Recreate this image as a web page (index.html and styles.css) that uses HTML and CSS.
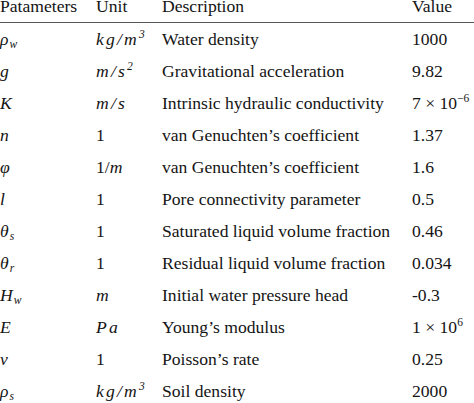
FILE: index.html
```html
<!DOCTYPE html>
<html>
<head>
<meta charset="utf-8">
<link rel="stylesheet" href="styles.css">
</head>
<body>
<div class="table">
  <div class="row head">
    <div class="c1">Patameters</div>
    <div class="c2">Unit</div>
    <div class="c3">Description</div>
    <div class="c4">Value</div>
  </div>
  <div class="row">
    <div class="c1 m">ρ<sub>w</sub></div>
    <div class="c2 m">kg/m<sup>3</sup></div>
    <div class="c3">Water density</div>
    <div class="c4">1000</div>
  </div>
  <div class="row">
    <div class="c1 m">g</div>
    <div class="c2 m">m/s<sup>2</sup></div>
    <div class="c3">Gravitational acceleration</div>
    <div class="c4">9.82</div>
  </div>
  <div class="row">
    <div class="c1 m">K</div>
    <div class="c2 m">m/s</div>
    <div class="c3">Intrinsic hydraulic conductivity</div>
    <div class="c4">7 × 10<sup>−6</sup></div>
  </div>
  <div class="row">
    <div class="c1 m">n</div>
    <div class="c2">1</div>
    <div class="c3">van Genuchten’s coefficient</div>
    <div class="c4">1.37</div>
  </div>
  <div class="row">
    <div class="c1 m">φ</div>
    <div class="c2">1/<span class="m">m</span></div>
    <div class="c3">van Genuchten’s coefficient</div>
    <div class="c4">1.6</div>
  </div>
  <div class="row">
    <div class="c1 m">l</div>
    <div class="c2">1</div>
    <div class="c3">Pore connectivity parameter</div>
    <div class="c4">0.5</div>
  </div>
  <div class="row">
    <div class="c1 m">θ<sub>s</sub></div>
    <div class="c2">1</div>
    <div class="c3">Saturated liquid volume fraction</div>
    <div class="c4">0.46</div>
  </div>
  <div class="row">
    <div class="c1 m">θ<sub>r</sub></div>
    <div class="c2">1</div>
    <div class="c3">Residual liquid volume fraction</div>
    <div class="c4">0.034</div>
  </div>
  <div class="row">
    <div class="c1 m">H<sub>w</sub></div>
    <div class="c2 m">m</div>
    <div class="c3">Initial water pressure head</div>
    <div class="c4">-0.3</div>
  </div>
  <div class="row">
    <div class="c1 m">E</div>
    <div class="c2 m">Pa</div>
    <div class="c3">Young’s modulus</div>
    <div class="c4">1 × 10<sup>6</sup></div>
  </div>
  <div class="row">
    <div class="c1 m">v</div>
    <div class="c2">1</div>
    <div class="c3">Poisson’s rate</div>
    <div class="c4">0.25</div>
  </div>
  <div class="row">
    <div class="c1 m">ρ<sub>s</sub></div>
    <div class="c2 m">kg/m<sup>3</sup></div>
    <div class="c3">Soil density</div>
    <div class="c4">2000</div>
  </div>
</div>
</body>
</html>
```
FILE: styles.css
```css
html, body {
  margin: 0;
  padding: 0;
  background: #ffffff;
}
body {
  font-family: "Liberation Serif", "Times New Roman", serif;
  font-size: 17.6px;
  color: #141414;
  overflow: hidden;
}
.table {
  display: flex;
  flex-direction: column;
  width: 474px;
}
.row {
  display: grid;
  grid-template-columns: 96px 66px 250px 1fr;
  height: 32px;
  line-height: 32px;
  white-space: nowrap;
}
.row.head {
  box-sizing: border-box;
  height: 23px;
  line-height: 12px;
  border-bottom: 1px solid #555555;
}
.m {
  font-style: italic;
  letter-spacing: 1px;
}
.c2.m, .c2 .m {
  letter-spacing: 2.2px;
}
sub, sup {
  font-size: 11.5px;
  line-height: 0;
  letter-spacing: 0;
}
sub {
  vertical-align: -3px;
}
sup {
  vertical-align: 7px;
}
```
